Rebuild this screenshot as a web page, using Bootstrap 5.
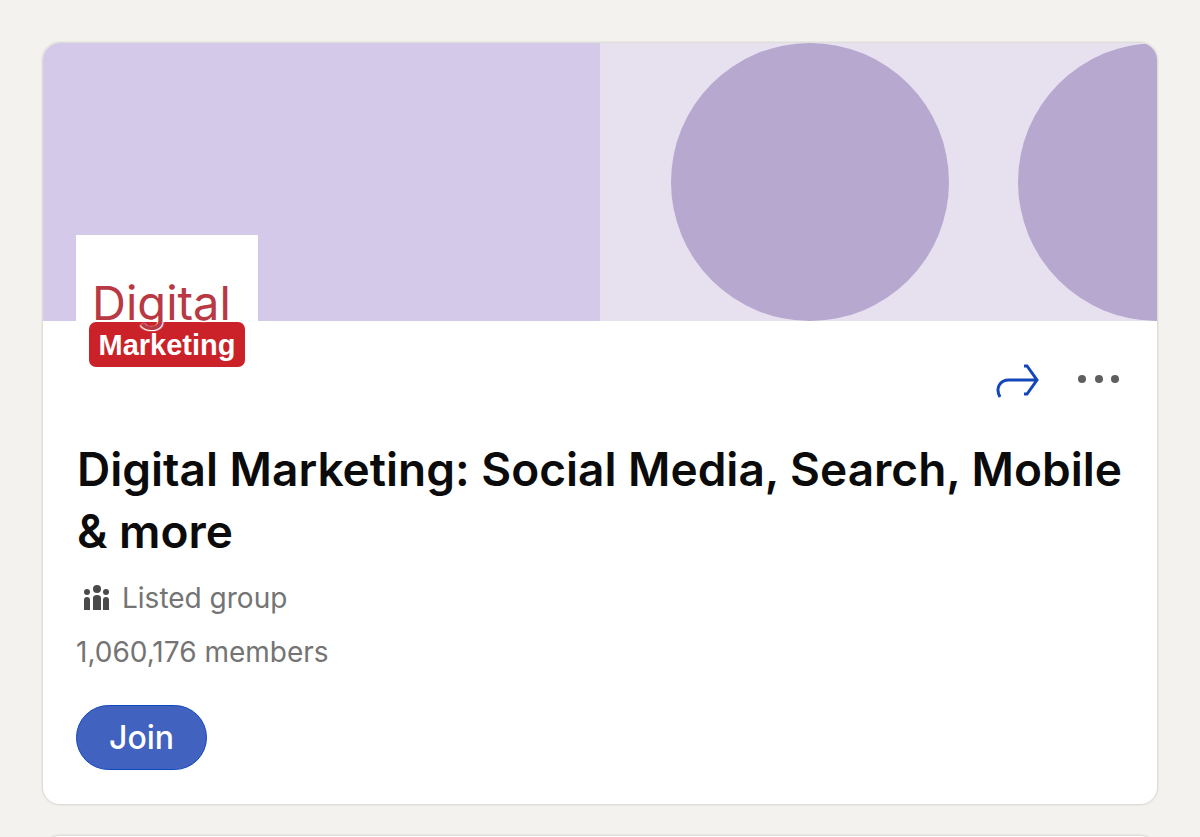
<!DOCTYPE html>
<html lang="en">
<head>
<meta charset="utf-8">
<meta name="viewport" content="width=device-width, initial-scale=1">
<title>Digital Marketing group</title>
<link href="https://cdn.jsdelivr.net/npm/bootstrap@5.3.0/dist/css/bootstrap.min.css" rel="stylesheet">
<style>
  body { background: #f3f2ee; font-family: Inter, "Liberation Sans", sans-serif; }
  .page { padding: 42px 42px 0; }
  .group-card { border: 1px solid #dfdedb; border-radius: 18px; box-shadow: 0 0 0 1px #e9e8e4; overflow: hidden; }
  .banner { display: block; width: 100%; height: auto; }
  .group-body { padding: 0 33px 34px; }
  .group-logo { width: 182px; height: 182px; margin-top: -86px; padding: 45px 13px 0; background: #fff; line-height: 1; }
  .logo-top { color: #b83843; font-size: 47px; font-weight: 400; line-height: 46px; height: 42px; padding-left: 3px; text-shadow: 0 0 1px #fff, 1px 1px 1px #fff, -1px 1px 1px #fff; }
  .logo-bottom { background: #cb2229; color: #fff; font: 700 29px/46px "Liberation Sans", sans-serif; border-radius: 7px; height: 45px; }
  .actions { gap: 34px; padding-top: 39px; }
  .group-title { color: #0b0b0b; font-size: 46px; font-weight: 600; line-height: 62px; margin: 21px -10px 17px 1px; }
  .meta-line { color: #747474; font-size: 28px; line-height: 38px; }
  .join { background: #4262c0; border: 1px solid #1147be; color: #fff; font-size: 32px; font-weight: 500; line-height: 39px; padding: 12px 32px; margin-top: 34px; }
  .join:hover { background: #1147be; color: #fff; }
  .next-card { height: 40px; margin-top: 30px; }
</style>
</head>
<body class="overflow-hidden">
<main class="page">
  <article class="group-card bg-white">
    <svg class="banner" viewBox="0 0 1114 278" aria-hidden="true">
      <path fill="#d4c9e8" d="M0 0h557v278H0z"/>
      <path fill="#e6e0ef" d="M557 0h557v278H557z"/>
      <circle cx="767" cy="139" r="139" fill="#b6a8cf"/>
      <circle cx="1114" cy="139" r="139" fill="#b6a8cf"/>
    </svg>
    <div class="group-body">
      <div class="d-flex justify-content-between align-items-start">
        <div class="group-logo position-relative">
          <div class="logo-top position-relative z-1">Digital</div>
          <div class="logo-bottom text-center">Marketing</div>
        </div>
        <div class="actions d-flex">
          <button type="button" class="btn p-0 border-0 lh-1" aria-label="Share">
            <svg width="48" height="40" viewBox="0 0 48 40" fill="none" stroke="#1546b9" stroke-width="3"><path d="M6 37C1 28 6 20 15 20H43M30 6h3l10 14-10 14h-3"/></svg>
          </button>
          <button type="button" class="btn p-0 border-0 lh-1" aria-label="More options">
            <svg width="48" height="40" viewBox="0 0 48 40" fill="#5f5f5f"><circle cx="6" cy="19" r="4"/><circle cx="23" cy="19" r="4"/><circle cx="39" cy="19" r="4"/></svg>
          </button>
        </div>
      </div>
      <h1 class="group-title">Digital Marketing: Social Media, Search, Mobile &amp; more</h1>
      <div class="meta-line d-flex align-items-center mb-3">
        <svg class="me-2" width="38" height="30" viewBox="0 0 38 30" fill="#4a4a4a" aria-hidden="true"><circle cx="11" cy="9" r="3"/><circle cx="21" cy="6" r="4"/><circle cx="30" cy="9" r="3"/><path d="M8 27V17q0-3 3-3t3 3v10zM17 27V15q0-3 4-3t4 3v12zM27 27V17q0-3 3-3t3 3v10z"/></svg>
        <span>Listed group</span>
      </div>
      <div class="meta-line">1,060,176 members</div>
      <button type="button" class="btn rounded-pill join">Join</button>
    </div>
  </article>
  <div class="group-card next-card bg-white"></div>
</main>
<script src="https://cdn.jsdelivr.net/npm/bootstrap@5.3.0/dist/js/bootstrap.bundle.min.js"></script>
</body>
</html>
